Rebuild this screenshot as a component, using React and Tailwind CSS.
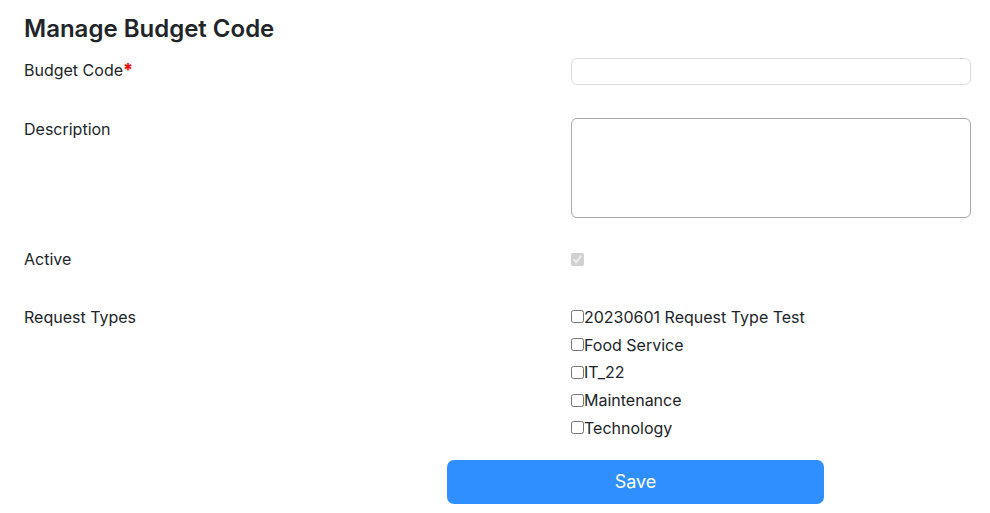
import React from "react";

const types = [
  "20230601 Request Type Test",
  "Food Service",
  "IT_22",
  "Maintenance",
  "Technology",
];

export default function App() {
  return (
    <div
      className="min-h-[513px] bg-white pl-[24px] pr-[19px] text-[#212529]"
      style={{ fontFamily: "Inter, 'Noto Sans', sans-serif" }}
    >
      <h1 className="pt-[13px] text-[24px] font-semibold leading-[32px]">
        Manage Budget Code
      </h1>

      <div className="mt-[13px] flex items-start">
        <div className="w-[547px] shrink-0 pt-[1px] text-[16px] leading-[22px]">
          Budget Code<span className="text-[18px] font-bold leading-[16px] text-[#ff0000]">*</span>
        </div>
        <input
          type="text"
          className="h-[27px] w-[400px] shrink-0 rounded-[6px] border border-[#dcdcdc] bg-white px-2 text-[16px] outline-none"
        />
      </div>

      <div className="mt-[33px] flex items-start">
        <div className="w-[547px] shrink-0 text-[16px] leading-[22px]">Description</div>
        <textarea className="h-[100px] w-[400px] shrink-0 resize-none rounded-[6px] border border-[#aaaaaa] bg-white px-2 text-[16px] outline-none" />
      </div>

      <div className="mt-[30px] flex items-start">
        <div className="w-[547px] shrink-0 text-[16px] leading-[22px]">Active</div>
        <div className="flex h-[22px] items-center">
          <input type="checkbox" checked disabled readOnly className="m-0 h-[13px] w-[13px]" />
        </div>
      </div>

      <div className="mt-[35px] flex items-start">
        <div className="w-[547px] shrink-0 pt-[1px] text-[16px] leading-[22px]">Request Types</div>
        <div className="-mt-[2px] flex flex-col">
          {types.map((t) => (
            <label key={t} className="flex h-[27.75px] items-center text-[16px]">
              <input type="checkbox" className="m-0 h-[13px] w-[13px]" />
              {t}
            </label>
          ))}
        </div>
      </div>

      <div className="mt-[18px] pl-[423px]">
        <button className="h-[44px] w-[377px] rounded-[7px] bg-[#2f8fff] text-[18px] text-white">
          Save
        </button>
      </div>
    </div>
  );
}
